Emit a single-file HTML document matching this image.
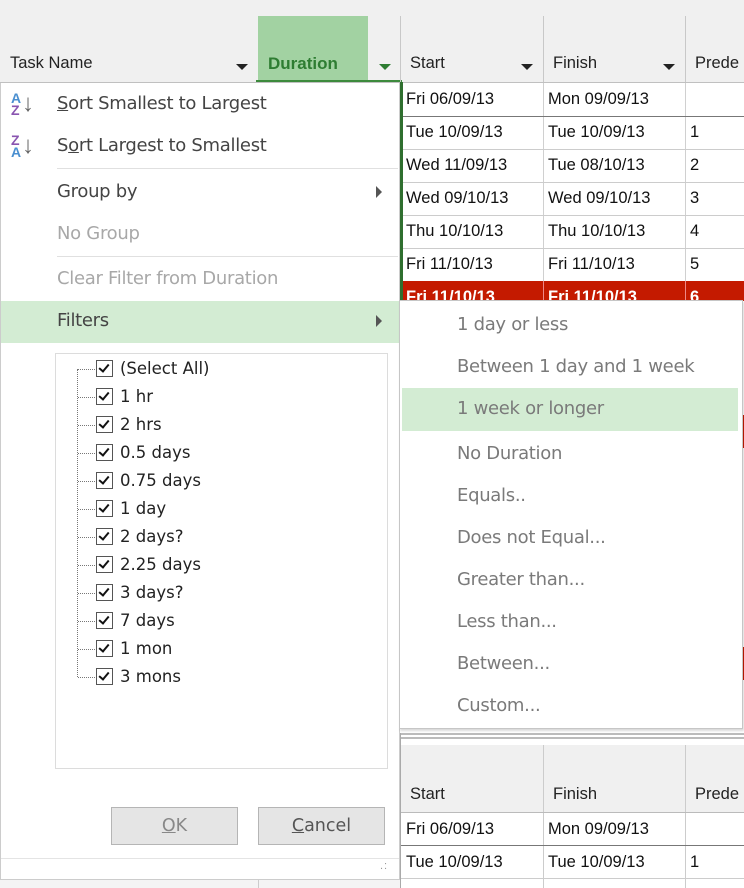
<!DOCTYPE html>
<html><head><meta charset="utf-8"><style>
*{margin:0;padding:0;box-sizing:border-box}
body{width:744px;height:888px;overflow:hidden;background:#fff;position:relative;font-family:"Liberation Sans",Arial,sans-serif}
.a{position:absolute}
.hdr{font-size:16.5px;color:#222}
.cell{position:absolute;font-size:16.5px;color:#111;white-space:nowrap}
.m{position:absolute;color:#444;white-space:nowrap;font-family:"DejaVu Sans","Liberation Sans",sans-serif;font-size:18px;letter-spacing:-0.3px}
.dis{color:#a8a8a8}
.sub{position:absolute;left:457px;font-family:"DejaVu Sans","Liberation Sans",sans-serif;font-size:18px;color:#7a7a7a;letter-spacing:-0.3px;white-space:nowrap}
.cb{position:absolute;left:96px;width:17px;height:17px;border:1.5px solid #555;background:#fff}
.cb:after{content:"";position:absolute;left:4px;top:1px;width:4px;height:8px;border:solid #111;border-width:0 2.5px 2.5px 0;transform:rotate(40deg)}
.ct{position:absolute;left:120px;font-family:"DejaVu Sans","Liberation Sans",sans-serif;font-size:16.5px;color:#222;white-space:nowrap}
.dash{position:absolute;left:78px;width:17px;border-top:1px dotted #777}
.tri{position:absolute;width:0;height:0;border-left:6px solid transparent;border-right:6px solid transparent;border-top:6px solid #222}
.rt{position:absolute;width:0;height:0;border-top:6px solid transparent;border-bottom:6px solid transparent;border-left:6px solid #555}
.il{position:absolute;font-size:14px;line-height:12px;font-weight:bold}
.ar{position:absolute;font-size:24px;line-height:26px;color:#666}
</style></head><body>
<!-- header -->
<div class="a" style="left:0;top:0;width:744px;height:83px;background:#f0f0f0"></div>
<div class="a" style="left:258px;top:16px;width:110px;height:65px;background:#a2d2a2"></div>
<div class="a" style="left:256px;top:80px;width:146px;height:2px;background:#3d8a3d"></div>
<div class="a" style="left:400px;top:16px;width:1px;height:67px;background:#c8c8c8"></div>
<div class="a" style="left:543px;top:16px;width:1px;height:67px;background:#c8c8c8"></div>
<div class="a" style="left:685px;top:16px;width:1px;height:67px;background:#c8c8c8"></div>
<div class="a" style="left:0;top:82px;width:744px;height:1px;background:#c0c0c0"></div>
<div class="a hdr" style="left:10px;top:54px">Task Name</div>
<div class="tri" style="left:236px;top:64px"></div>
<div class="a hdr" style="left:268px;top:54px;color:#2e7d32;font-weight:bold;font-size:17px">Duration</div>
<div class="tri" style="left:379px;top:64px;border-top-color:#2e7d32"></div>
<div class="a hdr" style="left:410px;top:54px">Start</div>
<div class="tri" style="left:521px;top:64px"></div>
<div class="a hdr" style="left:553px;top:54px">Finish</div>
<div class="tri" style="left:663px;top:64px"></div>
<div class="a hdr" style="left:695px;top:54px">Prede</div>
<!-- grid rows top -->
<div class="a" style="left:543px;top:83px;width:1px;height:220px;background:#d0d0d0"></div>
<div class="a" style="left:685px;top:83px;width:1px;height:220px;background:#d0d0d0"></div>
<div class="a" style="left:402px;top:116px;width:342px;height:1px;background:#777"></div>
<div class="a" style="left:402px;top:149px;width:342px;height:1px;background:#ccc"></div>
<div class="a" style="left:402px;top:182px;width:342px;height:1px;background:#ccc"></div>
<div class="a" style="left:402px;top:215px;width:342px;height:1px;background:#ccc"></div>
<div class="a" style="left:402px;top:248px;width:342px;height:1px;background:#ccc"></div>
<div class="a" style="left:402px;top:281px;width:342px;height:20px;background:#c41a00"></div>
<div class="a" style="left:543px;top:281px;width:1px;height:20px;background:#e88"></div>
<div class="a" style="left:685px;top:281px;width:1px;height:20px;background:#e88"></div>
<div class="a" style="left:400px;top:82px;width:3px;height:220px;background:#2f6f2f"></div>
<div class="cell" style="left:406px;top:90px">Fri 06/09/13</div><div class="cell" style="left:548px;top:90px">Mon 09/09/13</div>
<div class="cell" style="left:406px;top:123px">Tue 10/09/13</div><div class="cell" style="left:548px;top:123px">Tue 10/09/13</div><div class="cell" style="left:690px;top:123px">1</div>
<div class="cell" style="left:406px;top:156px">Wed 11/09/13</div><div class="cell" style="left:548px;top:156px">Tue 08/10/13</div><div class="cell" style="left:690px;top:156px">2</div>
<div class="cell" style="left:406px;top:189px">Wed 09/10/13</div><div class="cell" style="left:548px;top:189px">Wed 09/10/13</div><div class="cell" style="left:690px;top:189px">3</div>
<div class="cell" style="left:406px;top:222px">Thu 10/10/13</div><div class="cell" style="left:548px;top:222px">Thu 10/10/13</div><div class="cell" style="left:690px;top:222px">4</div>
<div class="cell" style="left:406px;top:255px">Fri 11/10/13</div><div class="cell" style="left:548px;top:255px">Fri 11/10/13</div><div class="cell" style="left:690px;top:255px">5</div>
<div class="a" style="left:402px;top:281px;width:342px;height:20px;overflow:hidden"><div class="cell" style="left:4px;top:7px;color:#fff;font-weight:bold">Fri 11/10/13</div><div class="cell" style="left:146px;top:7px;color:#fff;font-weight:bold">Fri 11/10/13</div><div class="cell" style="left:288px;top:7px;color:#fff;font-weight:bold">6</div></div>
<!-- right edge strips -->
<div class="a" style="left:742px;top:415px;width:2px;height:33px;background:#c41a00"></div>
<div class="a" style="left:742px;top:647px;width:2px;height:33px;background:#c41a00"></div>
<!-- bottom grid -->
<div class="a" style="left:400px;top:733px;width:344px;height:2px;background:#bbb"></div>
<div class="a" style="left:400px;top:737px;width:344px;height:2px;background:#bbb"></div>
<div class="a" style="left:400px;top:745px;width:344px;height:68px;background:#f0f0f0"></div>
<div class="a" style="left:543px;top:745px;width:1px;height:143px;background:#ccc"></div>
<div class="a" style="left:685px;top:745px;width:1px;height:143px;background:#ccc"></div>
<div class="a" style="left:400px;top:812px;width:344px;height:1px;background:#bbb"></div>
<div class="a" style="left:400px;top:845px;width:344px;height:1px;background:#777"></div>
<div class="a" style="left:400px;top:878px;width:344px;height:1px;background:#ccc"></div>
<div class="a" style="left:400px;top:733px;width:1px;height:155px;background:#aaa"></div>
<div class="a hdr" style="left:410px;top:785px">Start</div>
<div class="a hdr" style="left:553px;top:785px">Finish</div>
<div class="a hdr" style="left:695px;top:785px">Prede</div>
<div class="cell" style="left:406px;top:820px">Fri 06/09/13</div><div class="cell" style="left:548px;top:820px">Mon 09/09/13</div>
<div class="cell" style="left:406px;top:853px">Tue 10/09/13</div><div class="cell" style="left:548px;top:853px">Tue 10/09/13</div><div class="cell" style="left:690px;top:853px">1</div>
<!-- left menu -->
<div class="a" style="left:0;top:83px;width:400px;height:797px;background:#fff;border-right:1px solid #ccc;border-bottom:1px solid #ccc;border-left:1px solid #ccc"></div>
<div class="a" style="left:0;top:880px;width:400px;height:8px;background:#f4f4f4"></div>
<div class="a" style="left:258px;top:880px;width:1px;height:8px;background:#ccc"></div>
<div class="il" style="left:11px;top:92px;color:#4a8fd0">A</div>
<div class="il" style="left:11px;top:104px;color:#8a55b0">Z</div>
<div class="ar" style="left:22px;top:91px">↓</div>
<div class="il" style="left:11px;top:134px;color:#8a55b0">Z</div>
<div class="il" style="left:11px;top:146px;color:#4a8fd0">A</div>
<div class="ar" style="left:22px;top:133px">↓</div>
<div class="m" style="left:57px;top:93px"><u>S</u>ort Smallest to Largest</div>
<div class="m" style="left:57px;top:135px">S<u>o</u>rt Largest to Smallest</div>
<div class="a" style="left:57px;top:168px;width:341px;height:1px;background:#e0e0e0"></div>
<div class="m" style="left:57px;top:181px">Group by</div>
<div class="rt" style="left:376px;top:186px"></div>
<div class="m dis" style="left:57px;top:223px">No Group</div>
<div class="a" style="left:57px;top:256px;width:341px;height:1px;background:#e0e0e0"></div>
<div class="m dis" style="left:57px;top:268px">Clear Filter from Duration</div>
<div class="a" style="left:1px;top:301px;width:398px;height:42px;background:#d3ecd3"></div>
<div class="m" style="left:57px;top:310px">Filters</div>
<div class="rt" style="left:376px;top:315px"></div>
<!-- list box -->
<div class="a" style="left:55px;top:353px;width:333px;height:416px;border:1px solid #dcdcdc"></div>
<div class="a" style="left:77px;top:369px;height:308px;border-left:1px dotted #777"></div>
<div class="dash" style="top:369px"></div><div class="cb" style="top:360px"></div><div class="ct" style="top:359px">(Select All)</div>
<div class="dash" style="top:397px"></div><div class="cb" style="top:388px"></div><div class="ct" style="top:387px">1 hr</div>
<div class="dash" style="top:425px"></div><div class="cb" style="top:416px"></div><div class="ct" style="top:415px">2 hrs</div>
<div class="dash" style="top:453px"></div><div class="cb" style="top:444px"></div><div class="ct" style="top:443px">0.5 days</div>
<div class="dash" style="top:481px"></div><div class="cb" style="top:472px"></div><div class="ct" style="top:471px">0.75 days</div>
<div class="dash" style="top:509px"></div><div class="cb" style="top:500px"></div><div class="ct" style="top:499px">1 day</div>
<div class="dash" style="top:537px"></div><div class="cb" style="top:528px"></div><div class="ct" style="top:527px">2 days?</div>
<div class="dash" style="top:565px"></div><div class="cb" style="top:556px"></div><div class="ct" style="top:555px">2.25 days</div>
<div class="dash" style="top:593px"></div><div class="cb" style="top:584px"></div><div class="ct" style="top:583px">3 days?</div>
<div class="dash" style="top:621px"></div><div class="cb" style="top:612px"></div><div class="ct" style="top:611px">7 days</div>
<div class="dash" style="top:649px"></div><div class="cb" style="top:640px"></div><div class="ct" style="top:639px">1 mon</div>
<div class="dash" style="top:677px"></div><div class="cb" style="top:668px"></div><div class="ct" style="top:667px">3 mons</div>
<!-- buttons -->
<div class="a" style="left:111px;top:807px;width:127px;height:38px;background:#e5e5e5;border:1px solid #b5b5b5;text-align:center;line-height:36px;font-family:'DejaVu Sans',sans-serif;font-size:17.5px;color:#888"><u>O</u>K</div>
<div class="a" style="left:258px;top:807px;width:127px;height:38px;background:#e5e5e5;border:1px solid #b5b5b5;text-align:center;line-height:36px;font-family:'DejaVu Sans',sans-serif;font-size:17.5px;color:#555"><u>C</u>ancel</div>
<div class="a" style="left:1px;top:858px;width:398px;height:1px;background:#e4e4e4"></div>
<div class="a" style="left:380px;top:860px;font-size:11px;color:#999;letter-spacing:1px">.:</div>
<!-- submenu -->
<div class="a" style="left:399px;top:300px;width:344px;height:429px;background:#fff;border:1px solid #c6c6c6;box-shadow:1px 2px 2px rgba(0,0,0,0.15)"></div>
<div class="a" style="left:402px;top:388px;width:336px;height:43px;background:#d3ecd3"></div>
<div class="sub" style="top:314px">1 day or less</div>
<div class="sub" style="top:356px">Between 1 day and 1 week</div>
<div class="sub" style="top:398px">1 week or longer</div>
<div class="sub" style="top:443px">No Duration</div>
<div class="sub" style="top:485px">Equals..</div>
<div class="sub" style="top:527px">Does not Equal...</div>
<div class="sub" style="top:569px">Greater than...</div>
<div class="sub" style="top:611px">Less than...</div>
<div class="sub" style="top:653px">Between...</div>
<div class="sub" style="top:695px">Custom...</div>
</body></html>
